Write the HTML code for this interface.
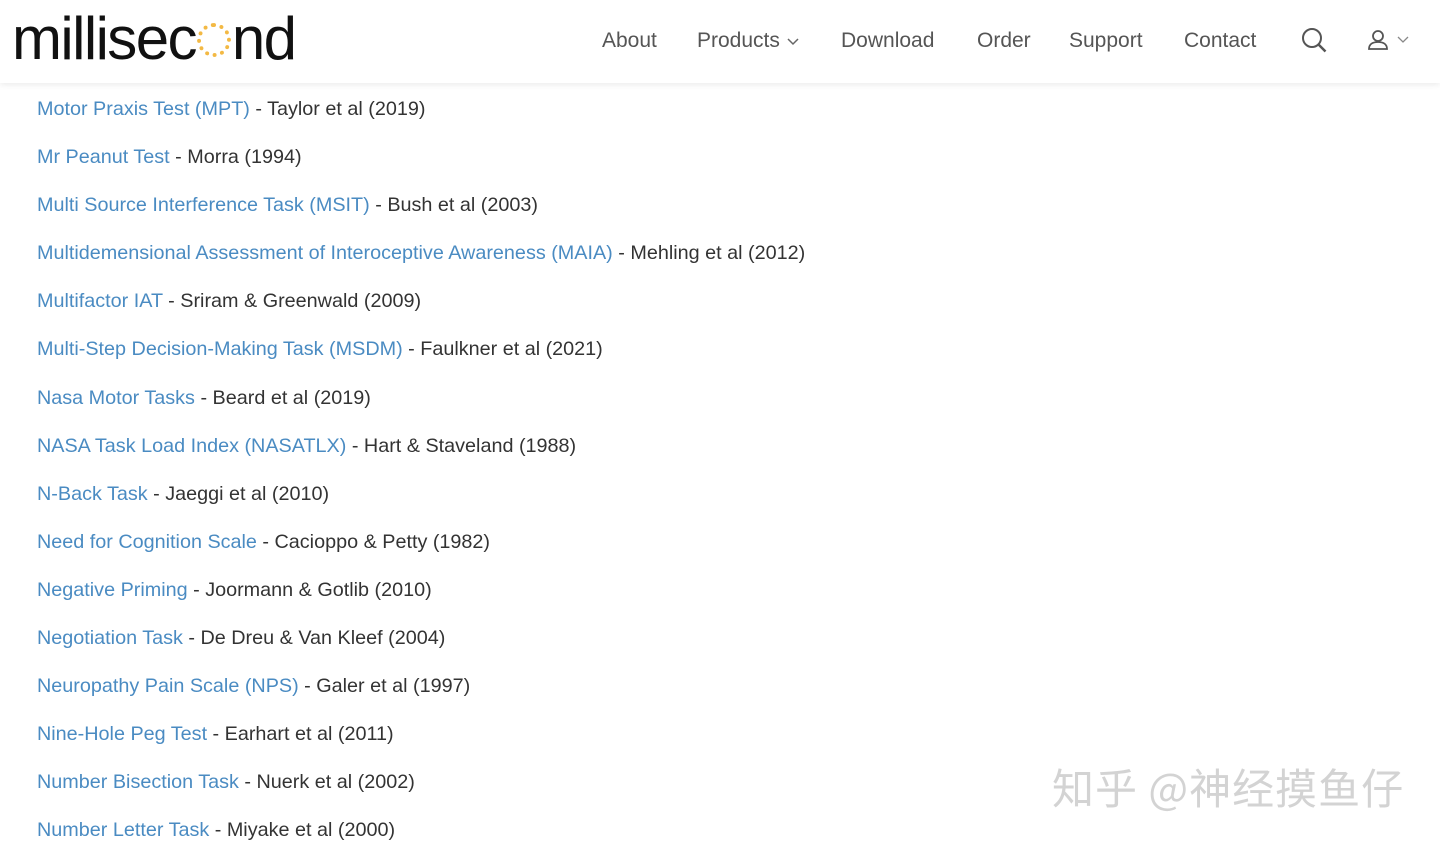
<!DOCTYPE html>
<html><head><meta charset="utf-8"><style>
body{margin:0;width:1440px;height:844px;overflow:hidden;background:#fff;font-family:"Liberation Sans",sans-serif;position:relative}
.hdr{position:absolute;left:0;top:0;width:1440px;height:83px;background:#fff;box-shadow:0 2px 6px rgba(0,0,0,.08);z-index:2}
.logo{position:absolute;left:12px;top:4px;font-size:60px;letter-spacing:-1.6px;color:#111;font-family:"Liberation Sans",sans-serif}
.logo .o{display:inline-block;width:26px;height:26px;border:4px dotted #f3b944;border-radius:50%;vertical-align:2px;margin:0 1px}
.nav{position:absolute;top:29px;font-size:21px;color:#555}
.list{position:absolute;left:37px;top:95px;font-size:19.8px;color:#333}
.list div{height:48.1px;line-height:29px;white-space:nowrap}
.list a{color:#4a8bc2;text-decoration:none}
.wm{position:absolute;left:1052px;top:756px;font-size:42px;color:rgba(200,200,200,.8);font-family:"Noto Sans CJK SC",sans-serif;letter-spacing:1px}
</style></head><body>
<div class="hdr">
<div class="logo">millisec<span class="o"></span>nd</div>
<span class="nav" style="left:602px">About</span>
<span class="nav" style="left:697px">Products <svg width="14" height="10" viewBox="0 0 14 10"><path d="M2 2l5 5 5-5" fill="none" stroke="#666" stroke-width="1.5"/></svg></span>
<span class="nav" style="left:841px">Download</span>
<span class="nav" style="left:977px">Order</span>
<span class="nav" style="left:1069px">Support</span>
<span class="nav" style="left:1184px">Contact</span>
<svg style="position:absolute;left:1300px;top:27px" width="30" height="28" viewBox="0 0 30 28"><circle cx="12" cy="11" r="9" fill="none" stroke="#555" stroke-width="2"/><path d="M18.5 17.5l7 7" stroke="#555" stroke-width="2.5"/></svg>
<svg style="position:absolute;left:1366px;top:28px" width="46" height="24" viewBox="0 0 46 24"><circle cx="12" cy="8" r="5" fill="none" stroke="#555" stroke-width="1.8"/><path d="M3 21c0-5 4-7 9-7s9 2 9 7z" fill="none" stroke="#555" stroke-width="1.8"/><path d="M32 9l5 5 5-5" fill="none" stroke="#888" stroke-width="1.3"/></svg>
</div>
<div class="list">
<div><a>Motor Praxis Test (MPT)</a> - Taylor et al (2019)</div>
<div><a>Mr Peanut Test</a> - Morra (1994)</div>
<div><a>Multi Source Interference Task (MSIT)</a> - Bush et al (2003)</div>
<div><a>Multidemensional Assessment of Interoceptive Awareness (MAIA)</a> - Mehling et al (2012)</div>
<div><a>Multifactor IAT</a> - Sriram &amp; Greenwald (2009)</div>
<div><a>Multi-Step Decision-Making Task (MSDM)</a> - Faulkner et al (2021)</div>
<div><a>Nasa Motor Tasks</a> - Beard et al (2019)</div>
<div><a>NASA Task Load Index (NASATLX)</a> - Hart &amp; Staveland (1988)</div>
<div><a>N-Back Task</a> - Jaeggi et al (2010)</div>
<div><a>Need for Cognition Scale</a> - Cacioppo &amp; Petty (1982)</div>
<div><a>Negative Priming</a> - Joormann &amp; Gotlib (2010)</div>
<div><a>Negotiation Task</a> - De Dreu &amp; Van Kleef (2004)</div>
<div><a>Neuropathy Pain Scale (NPS)</a> - Galer et al (1997)</div>
<div><a>Nine-Hole Peg Test</a> - Earhart et al (2011)</div>
<div><a>Number Bisection Task</a> - Nuerk et al (2002)</div>
<div><a>Number Letter Task</a> - Miyake et al (2000)</div>
</div>
<div class="wm">知乎 @神经摸鱼仔</div>
</body></html>
